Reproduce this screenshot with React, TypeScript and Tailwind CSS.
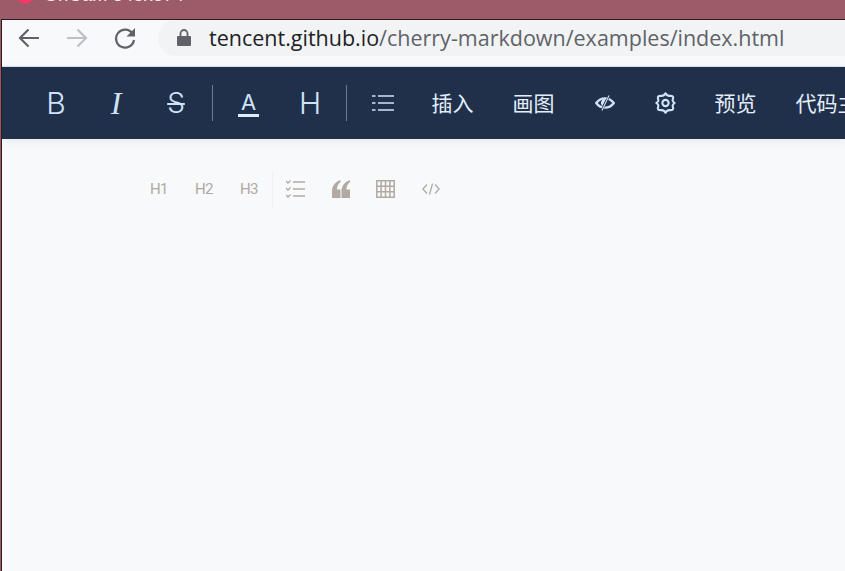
import type { ReactNode } from 'react';

// 浏览器地址栏
function AddressBar() {
  return (
    <div className="flex h-[47px] items-center border-b border-[#dfe1e4] bg-[#f8f9fb] pb-[10px]">
      <svg width="24" height="24" viewBox="0 0 24 24" className="ml-[15px] text-[#5f6368]" fill="none" stroke="currentColor" strokeWidth="2.2">
        <path d="M22 12H3M11.5 3.5 3 12l8.5 8.500" />
      </svg>
      <svg width="24" height="24" viewBox="0 0 24 24" className="ml-[24px] text-[#bdc0c5]" fill="none" stroke="currentColor" strokeWidth="2.2">
        <path d="M2 12h19M12.500 3.500 21 12l-8.500 8.500" />
      </svg>
      <svg width="24" height="24" viewBox="0 0 24 24" className="ml-[24px] text-[#5f6368]" fill="none">
        <path d="M19.500 7.500A9 9 0 1 0 21 14" stroke="currentColor" strokeWidth="2.2" />
        <path d="M22 2v8.500h-8.500z" fill="currentColor" />
      </svg>
      <div className="ml-[21px] flex h-[36px] flex-1 items-center rounded-l-full bg-[#f1f3f5] pl-[19px]">
        <svg width="14" height="18" viewBox="0 0 14 18" className="text-[#5f6368]">
          <path d="M1 7h12a1 1 0 0 1 1 1v8a1 1 0 0 1-1 1H1a1 1 0 0 1-1-1V8a1 1 0 0 1 1-1z" fill="currentColor" />
          <path d="M3.500 8V4.500a3.500 3.500 0 0 1 7 0V8" fill="none" stroke="currentColor" strokeWidth="1.800" />
        </svg>
        <span className="ml-[18px] whitespace-nowrap font-['Open_Sans','Noto_Sans',sans-serif] text-[21.5px] text-[#5f6368]">
          <span className="text-[#202124]">tencent.github.io</span>/cherry-markdown/examples/index.html
        </span>
      </div>
    </div>
  );
}

function ToolButton({ children }: { children: ReactNode }) {
  return <div className="flex h-[36px] shrink-0 items-center justify-center px-[20px]">{children}</div>;
}

function TextButton({ children }: { children: string }) {
  return (
    <div className="flex h-[36px] shrink-0 items-center justify-center px-[19.500px]">
      <span className="-translate-y-[1.500px] whitespace-nowrap text-[21px] leading-none text-[#e3eefa]">{children}</span>
    </div>
  );
}

function Divider() {
  return <div className="mx-[5.500px] h-[36px] w-px shrink-0 bg-[#6f7c90]" />;
}

// 主工具栏
function Toolbar() {
  return (
    <div className="flex h-[72px] items-center overflow-hidden bg-[#20304b] pl-[24px] font-['Noto_Sans_CJK_SC',sans-serif] text-[#cfe3f7] shadow-[0_3px_10px_rgba(40,60,90,0.08)]">
      <ToolButton>
        <span className="w-[20px] text-center font-['Inter',sans-serif] text-[30px] font-light leading-none">B</span>
      </ToolButton>
      <ToolButton>
        <span className="w-[20px] text-center font-['Liberation_Serif',serif] text-[32px] italic leading-none">I</span>
      </ToolButton>
      <ToolButton>
        <span className="w-[20px] text-center font-['Inter',sans-serif] text-[28px] font-light leading-none line-through">S</span>
      </ToolButton>
      <Divider />
      <ToolButton>
        <span className="w-[21px] border-b-[3px] border-[#dcecfb] text-center font-['Inter',sans-serif] text-[22px] font-normal leading-[24px]">A</span>
      </ToolButton>
      <ToolButton>
        <span className="w-[20px] text-center font-['Inter',sans-serif] text-[30px] font-light leading-none">H</span>
      </ToolButton>
      <div className="ml-[1px]"><Divider /></div>
      <div className="flex h-[36px] shrink-0 items-center pl-[20px] pr-[18px]">
        <svg width="22" height="18" viewBox="0 0 22 18" fill="none" stroke="currentColor" strokeWidth="1.500">
          <path d="M6 2h16M6 9h16M6 16h16M0 2h3.500M0 9h3.500M0 16h3.500" />
        </svg>
      </div>
      <TextButton>插入</TextButton>
      <TextButton>画图</TextButton>
      <ToolButton>
        <svg width="20" height="16" viewBox="0 0 20 16" className="-mr-[1px] ml-[1px]" fill="none">
          <path d="M1.200 8c2.200-3 5-4.700 8.800-4.700S16.600 5 18.800 8c-2.200 3-5 4.700-8.800 4.700S3.400 11 1.200 8z" stroke="#cfe3f7" strokeWidth="2.300" />
          <path d="M11 4A4 4 0 0 0 7.500 11z" fill="#cfe3f7" />
          <path d="M14.500 0 6.500 16" stroke="#20304b" strokeWidth="2.200" />
          <path d="M14 .5 7 15.500" stroke="#cfe3f7" strokeWidth="1.100" />
        </svg>
      </ToolButton>
      <ToolButton>
        <svg width="21" height="22" viewBox="0 0 20 21" className="-mr-[1px] ml-[1px]" fill="none" stroke="currentColor" strokeWidth="2" strokeLinejoin="round">
          <path d="M10 1.200c1 1.800 2.400 2.700 4.200 2.500 1.400-.1 2.800.1 3 1 .4 1-.4 2.200-.4 3.300 0 1 .9 1.700 1.900 2.500-1 .8-1.900 1.500-1.900 2.500 0 1.100.8 2.300.4 3.300-.2.900-1.600 1.100-3 1-1.800-.2-3.200.7-4.200 2.500-1-1.800-2.400-2.700-4.200-2.500-1.400.1-2.800-.1-3-1-.4-1 .4-2.200.4-3.300 0-1-.9-1.700-1.900-2.500 1-.8 1.900-1.500 1.900-2.500 0-1.100-.8-2.300-.4-3.300.2-.9 1.600-1.100 3-1C7.600 3.900 9 3 10 1.200z" />
          <circle cx="10" cy="10.500" r="3" />
        </svg>
      </ToolButton>
      <TextButton>预览</TextButton>
      <TextButton>代码主题</TextButton>
    </div>
  );
}

function FloatItem({ children }: { children: ReactNode }) {
  return <div className="flex h-[36px] w-[45px] shrink-0 items-center justify-center">{children}</div>;
}

// 悬浮工具栏
function FloatBar() {
  return (
    <div className="ml-[134.500px] mt-[32px] flex h-[36px] items-center font-['Roboto',sans-serif] text-[15px] tracking-[-0.5px] text-[#b0aaa2]">
      <FloatItem>H1</FloatItem>
      <FloatItem>H2</FloatItem>
      <FloatItem>H3</FloatItem>
      <div className="h-[36px] w-px shrink-0 bg-[#eef0f3]" />
      <FloatItem>
        <svg width="19" height="18" viewBox="0 0 19 18" className="ml-[1px]" fill="none" stroke="currentColor" strokeWidth="1.300">
          <path d="M7 2h12M7 9h12M7 16h12M0 1l2 2 2.500-2.500M0 8l2 2 2.500-2.500M0 15l2 2 2.500-2.500" />
        </svg>
      </FloatItem>
      <FloatItem>
        <svg width="18" height="18" viewBox="0 0 18 18" className="ml-[1px]" fill="currentColor">
          <path d="M8.500 0C4 1.500 0 5.500 0 11v7h8.500V9.500H4.800C5 6 6.500 3.500 8.500 2zM18 0c-4.500 1.500-8.500 5.500-8.500 11v7H18V9.500h-3.700C14.500 6 16 3.500 18 2z" />
        </svg>
      </FloatItem>
      <FloatItem>
        <svg width="19" height="18" viewBox="0 0 19 18" className="ml-[1px]" fill="none" stroke="currentColor" strokeWidth="1.500">
          <path d="M.8.800h17.400v16.400H.8zM.8 6.300h17.400M.8 11.700h17.400M5.100.8v16.400M9.500.8v16.400M13.900.8v16.400" />
        </svg>
      </FloatItem>
      <FloatItem>
        <svg width="18" height="12" viewBox="0 0 18 12" className="ml-[1px]" fill="none" stroke="currentColor" strokeWidth="1.300">
          <path d="M5 1.500.8 6 5 10.500M13 1.500 17.200 6 13 10.500M10.500 .5 7.500 11.500" />
        </svg>
      </FloatItem>
    </div>
  );
}

export default function App() {
  return (
    <div className="h-[571px] w-[845px] overflow-hidden bg-[#9b5b68]">
      <div className="flex h-[19px] items-start overflow-hidden">
        <div className="ml-[17px] -mt-[12px] h-[16px] w-[16px] shrink-0 rounded-full bg-[#f03a68]" />
        <span className="ml-[11px] -mt-[18px] whitespace-nowrap font-['Liberation_Sans',sans-serif] text-[18px] tracking-[0.3px] text-[#f8ecee]">OhCam 845x574</span>
      </div>
      <div className="ml-[1px] h-[552px] border-l border-t border-[#2a1c20] bg-[#f8f9fb]">
        <AddressBar />
        <Toolbar />
        <FloatBar />
      </div>
    </div>
  );
}
